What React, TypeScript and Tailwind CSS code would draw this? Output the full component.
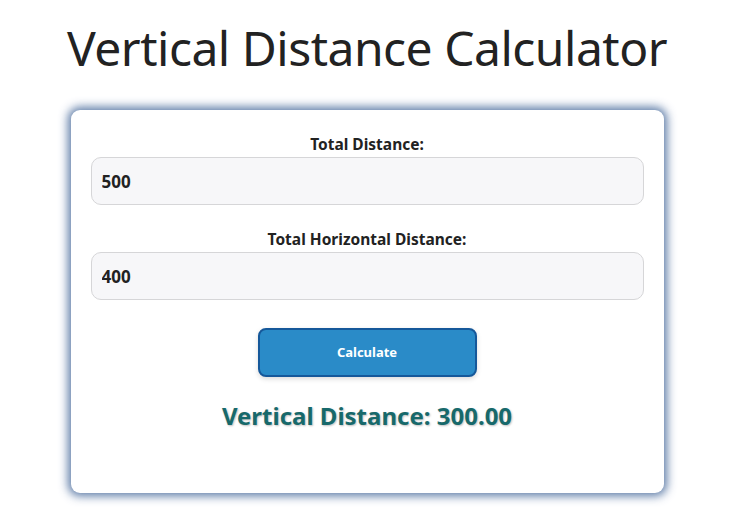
const fieldClass =
  'w-full h-12 rounded-[10px] border border-[#d6d6d8] bg-[#f7f7f9] px-[10px] text-[17px] font-bold text-[#222] outline-none';

export default function App() {
  return (
    <div className="min-h-[524px] bg-white font-['Noto_Sans','Open_Sans',sans-serif] text-[#222]">
      <h1 className="pt-[16px] text-center text-[48px] leading-[64px] font-normal tracking-[-0.5px] text-[#222]">
        Vertical Distance Calculator
      </h1>
      <div className="mx-auto mt-[30px] w-[593px] rounded-[9px] bg-white px-5 pt-6 pb-[61px] shadow-[0_0_10px_3px_rgba(65,100,150,0.85)]">
        <div className="mb-6">
          <label className="mb-[3px] block text-center text-[15.5px] leading-[20px] font-bold">
            Total Distance:
          </label>
          <input className={fieldClass} defaultValue="500" />
        </div>
        <div>
          <label className="mb-[3px] block text-center text-[15.5px] leading-[20px] font-bold">
            Total Horizontal Distance:
          </label>
          <input className={fieldClass} defaultValue="400" />
        </div>
        <div className="mt-[28px] flex justify-center">
          <button className="h-[49px] w-[219px] rounded-[8px] border-2 border-[#15589a] bg-[#2a8bc8] text-[13px] font-bold text-white shadow-[0_2px_5px_rgba(0,0,0,0.15)]">
            Calculate
          </button>
        </div>
        <p className="mt-[23px] text-center text-[24px] leading-[32px] font-bold text-[#17696b] [text-shadow:1px_1px_2px_rgba(0,0,0,0.25)]">
          Vertical Distance: 300.00
        </p>
      </div>
    </div>
  );
}
